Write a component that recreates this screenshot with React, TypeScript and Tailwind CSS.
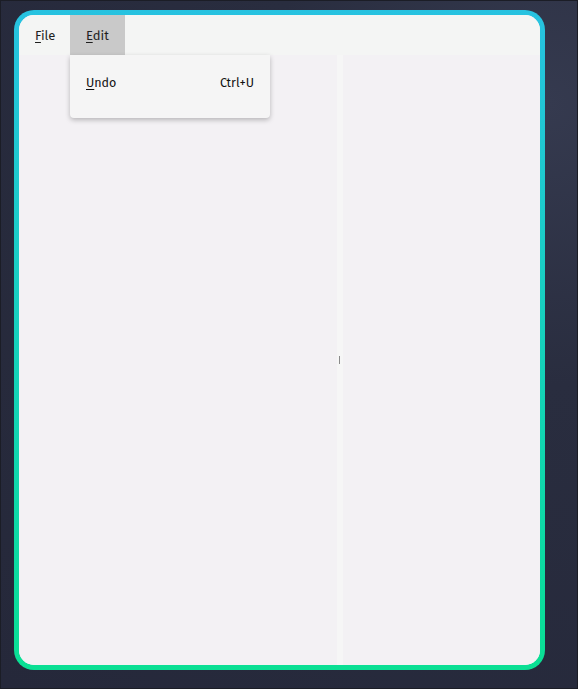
import React from 'react';

const font = { fontFamily: '"Fira Sans", "Open Sans", "Noto Sans", sans-serif' };

const MenuButton: React.FC<{ label: string; width: string; active?: boolean }> = ({ label, width, active }) => (
  <div
    className={`h-full ${width} pl-4 pt-px flex items-center text-[13px] text-[#1f1f1f] ${active ? 'bg-[#c9c9c9]' : ''}`}
  >
    <span>
      <span className="underline underline-offset-2">{label[0]}</span>
      {label.slice(1)}
    </span>
  </div>
);

const App: React.FC = () => {
  return (
    <div
      className="w-[578px] h-[689px] border border-[#1b1d26] bg-[radial-gradient(circle_at_95%_15%,#353a4f_0%,#292d3f_35%,#25283a_100%)] pl-[13px] pt-[9px]"
      style={font}
    >
      <div className="w-[531px] h-[660px] rounded-[20px] p-[5px] bg-gradient-to-b from-[#27c2e0] to-[#0adf93]">
        <div className="relative w-full h-full rounded-[15px] overflow-hidden flex flex-col bg-[#f3f1f4]">
          {/* menu bar */}
          <div className="h-[40px] flex bg-[#f4f5f4]">
            <MenuButton label="File" width="w-[51px]" />
            <MenuButton label="Edit" width="w-[55px]" active />
          </div>

          {/* split panes */}
          <div className="flex-1 flex">
            <div className="w-[318px] bg-[#f3f1f4]" />
            <div className="w-[6px] bg-[#f6f6f6] flex items-center pl-[2px]">
              <div className="w-px h-[8px] bg-[#8a8a8a]" />
            </div>
            <div className="flex-1 bg-[#f3f1f4]" />
          </div>

          {/* Edit dropdown */}
          <div className="absolute left-[51px] top-[40px] w-[200px] h-[63px] rounded-b-[4px] bg-[#f5f5f5] shadow-[0_2px_5px_rgba(0,0,0,0.25)] pt-[18px] px-4">
            <div className="flex justify-between items-center h-[20px] text-[12.5px] text-[#111]">
              <span>
                <span className="underline underline-offset-2">U</span>ndo
              </span>
              <span>Ctrl+U</span>
            </div>
          </div>
        </div>
      </div>
    </div>
  );
};

export default App;
